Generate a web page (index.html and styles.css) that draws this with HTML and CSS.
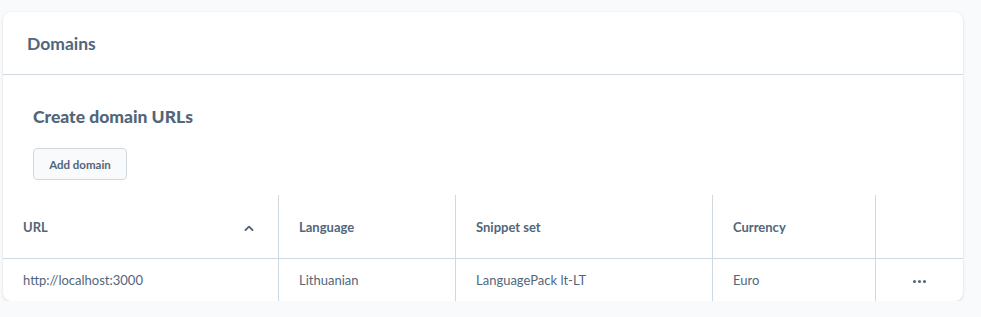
FILE: index.html
```html
<!DOCTYPE html>
<html lang="en">
<head>
<meta charset="utf-8">
<title>Domains</title>
<link rel="stylesheet" href="styles.css">
</head>
<body>
<div class="card">
  <div class="card-header">Domains</div>
  <div class="card-content">
    <h3 class="title">Create domain URLs</h3>
    <button class="btn" type="button">Add domain</button>
  </div>
  <div class="grid">
    <div class="cell head first">
      <span>URL</span>
      <svg class="sort" width="10" height="6" viewBox="0 0 10 6"><path d="M1.5 5 L5 1.6 L8.5 5" fill="none" stroke="#52667a" stroke-width="1.8" stroke-linecap="round" stroke-linejoin="round"/></svg>
    </div>
    <div class="cell head">Language</div>
    <div class="cell head">Snippet set</div>
    <div class="cell head">Currency</div>
    <div class="cell head"></div>
    <div class="cell row first">http://localhost:3000</div>
    <div class="cell row">Lithuanian</div>
    <div class="cell row">LanguagePack lt-LT</div>
    <div class="cell row">Euro</div>
    <div class="cell row actions"><span class="dots"><i></i><i></i><i></i></span></div>
  </div>
</div>
</body>
</html>
```
FILE: styles.css
```css
html, body {
  margin: 0;
  padding: 0;
  background: #f9fafb;
}
body {
  padding: 12px 18px 0 3px;
  font-family: Lato, "Open Sans", sans-serif;
  color: #52667a;
}
.card {
  width: 960px;
  background: #fff;
  border-radius: 8px;
  box-shadow: 0 1px 3px rgba(0, 0, 0, 0.12), 0 0 1px rgba(0, 0, 0, 0.06);
  overflow: hidden;
}
.card-header {
  height: 62px;
  display: flex;
  align-items: center;
  padding: 0 24px;
  font-size: 17.5px;
  font-weight: 700;
  border-bottom: 1px solid #d1d9e0;
}
.card-content {
  padding: 30px 30px 0;
}
.title {
  margin: 0;
  font-size: 17.5px;
  line-height: 24px;
  font-weight: 900;
}
.btn {
  margin-top: 19px;
  width: 94px;
  height: 32px;
  border: 1px solid #d1d9e0;
  border-radius: 4px;
  background: #f9fafb;
  color: #52667a;
  font-family: inherit;
  font-size: 11.5px;
  font-weight: 700;
  padding: 0;
}
.grid {
  margin-top: 15px;
  display: grid;
  grid-template-columns: 275px 177px 257px 163px 1fr;
}
.cell {
  display: flex;
  align-items: center;
  padding: 0 20px;
  border-left: 1px solid #d1d9e0;
  font-size: 13px;
}
.cell.first {
  border-left: none;
}
.head {
  height: 63px;
  border-bottom: 1px solid #d1d9e0;
  font-weight: 700;
}
.head.first {
  justify-content: space-between;
  padding-right: 24px;
}
.sort {
  margin-top: 3px;
}
.row {
  height: 42px;
}
.actions {
  justify-content: center;
}
.dots {
  display: flex;
  gap: 2px;
  margin-top: 3px;
}
.dots i {
  width: 3px;
  height: 3px;
  border-radius: 50%;
  background: #52667a;
}
```
